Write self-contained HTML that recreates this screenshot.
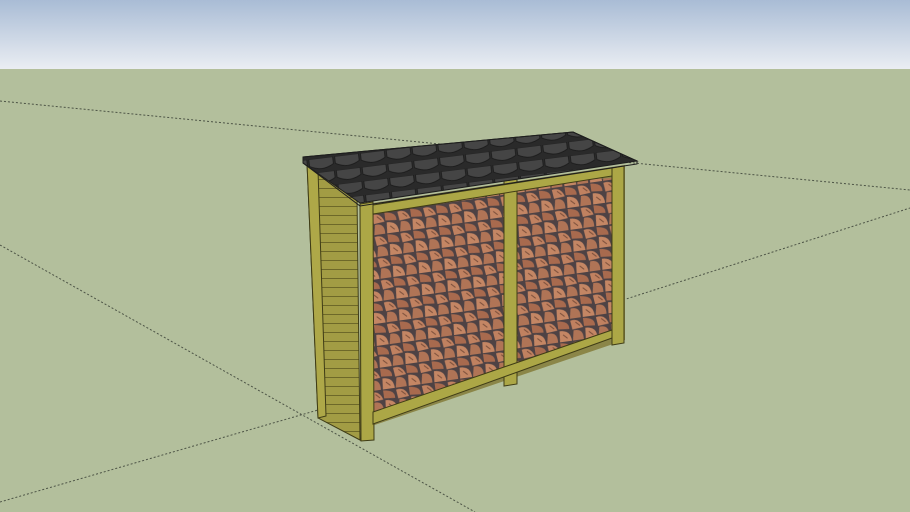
<!DOCTYPE html><html><head><style>body{margin:0}svg{display:block}</style></head><body>
<svg width="910" height="512" viewBox="0 0 910 512" xmlns="http://www.w3.org/2000/svg">
<defs>
<linearGradient id="sky" x1="0" y1="0" x2="0" y2="1"><stop offset="0" stop-color="#a9bcd5"/><stop offset="1" stop-color="#ebeef3"/></linearGradient>
<pattern id="wood" width="26" height="22" patternUnits="userSpaceOnUse" patternTransform="rotate(-8)">
<rect width="26" height="22" fill="#4e4244"/>
<path d="M0 1 Q9 -1 12 9 L1 10Z" fill="#c08160"/>
<path d="M13 0 Q25 1 24 9 L13 8Z" fill="#a86a4e"/>
<path d="M2 11 Q12 10 11 21 L0 21Z" fill="#b07456"/>
<path d="M14 10 Q25 10 25 21 L13 21Z" fill="#c48664"/>
<path d="M5 3 L9 7" stroke="#7a4e3a" stroke-width="1"/>
<path d="M17 14 L21 18" stroke="#7a4e3a" stroke-width="1"/>
</pattern>
<pattern id="shing" width="26" height="14" patternUnits="userSpaceOnUse" patternTransform="rotate(-7)">
<rect width="26" height="14" fill="#2a2a2a"/>
<path d="M1 0 H25 V7 Q13 14 1 7Z" fill="#454545" stroke="#1a1a1a" stroke-width="0.8"/>
</pattern>
<pattern id="plank" width="10" height="9" patternUnits="userSpaceOnUse">
<rect width="10" height="9" fill="#a29c44"/><line x1="0" y1="8.5" x2="10" y2="8.5" stroke="#5f5a22" stroke-width="0.8"/>
</pattern>
</defs>
<rect width="910" height="70" fill="url(#sky)"/>
<rect y="69" width="910" height="443" fill="#b3bf9c"/>
<g stroke="#4d5446" stroke-width="1" stroke-dasharray="2 2" fill="none">
<line x1="0" y1="101" x2="910" y2="190"/>
<line x1="0" y1="245" x2="475" y2="512"/>
<line x1="0" y1="502" x2="318" y2="410"/>
<line x1="623" y1="300" x2="910" y2="208"/>
</g>
<polygon points="360,205 625,165 625,340 360,430" fill="#8b8648"/>
<polygon points="373,213 440,200 505,190 505,375 373,415" fill="url(#wood)"/>
<polygon points="517,188 570,180 613,178 613,333 517,370" fill="url(#wood)"/>
<polygon points="307,163 357,196 360,440 318,418" fill="url(#plank)" stroke="#3f3c16" stroke-width="1"/>
<polygon points="307,163 318,170 326,416 318,418" fill="#aea848" stroke="#3f3c16" stroke-width="1"/>
<g fill="#aca746" stroke="#3f3c16" stroke-width="1">
<polygon points="612,168 624,166 624,343 612,345"/>
<polygon points="504,181 517,179 517,384 504,386"/>
<polygon points="360,204 373,202 374,440 361,441"/>
<polygon points="373,205 612,168 612,176 373,214"/>
<polygon points="373,412 612,330 612,338 373,424"/>
</g>
<polygon points="303,157 573,132 637,161 360,203 303,163" fill="url(#shing)" stroke="#1e1e1e" stroke-width="1"/>
<polygon points="303,157 573,132 637,161 637,164 360,206 303,163" fill="none" stroke="#1e1e1e" stroke-width="1"/>
</svg>
</body></html>
